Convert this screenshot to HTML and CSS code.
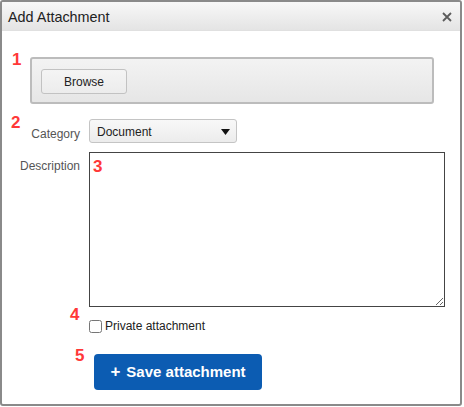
FILE: index.html
```html
<!DOCTYPE html>
<html>
<head>
<meta charset="utf-8">
<link rel="stylesheet" href="styles.css">
</head>
<body>
<div class="dialog">
  <div class="titlebar">
    <span class="title">Add Attachment</span>
    <span class="close">
      <svg width="10" height="10" viewBox="0 0 10 10"><path d="M1 1L9 9M9 1L1 9" stroke="#5c5c5c" stroke-width="1.8" stroke-linecap="butt"/></svg>
    </span>
  </div>
  <div class="content">
    <div class="filebox"><button class="browse">Browse</button></div>
    <div class="row row-cat">
      <label class="lbl lbl-cat">Category</label>
      <div class="select"><span>Document</span>
        <svg width="9" height="6" viewBox="0 0 9 6"><path d="M0 0H9L4.5 6Z" fill="#111"/></svg>
      </div>
    </div>
    <div class="row row-desc">
      <label class="lbl lbl-desc">Description</label>
      <textarea class="desc"></textarea>
    </div>
    <div class="check"><input type="checkbox" class="cb"><span>Private attachment</span></div>
    <div class="actions"><button class="save"><span class="plus">+</span>Save attachment</button></div>
  </div>
  <span class="num n1">1</span>
  <span class="num n2">2</span>
  <span class="num n3">3</span>
  <span class="num n4">4</span>
  <span class="num n5">5</span>
</div>
</body>
</html>
```
FILE: styles.css
```css
html, body { margin: 0; padding: 0; background: #fff; }
body { font-family: "Liberation Sans", Arial, sans-serif; color: #222; }
.dialog {
  position: relative;
  width: 462px; height: 406px;
  box-sizing: border-box;
  border: 2px solid #8a8a8a;
  border-radius: 3px;
  background: #fff;
  overflow: hidden;
}
.titlebar {
  height: 28px;
  display: flex; align-items: center; justify-content: space-between;
  padding: 0 8px 0 6px;
  background: linear-gradient(#f8f8f8, #e4e4e4);
  border-bottom: 1px solid #e0e0e0;
}
.title { font-size: 14.4px; color: #222; padding-top: 1px; }
.close { display: flex; width: 10px; height: 10px; margin-top: 1px; }
.content { display: flex; flex-direction: column; }
.filebox {
  margin: 26px 0 0 28px;
  width: 404px; height: 47px; box-sizing: border-box;
  border: 2px solid #bcbcbc; border-radius: 3px;
  background: linear-gradient(#f3f3f3, #e6e6e6);
  padding: 10px 0 0 9px;
}
.browse {
  display: block; width: 86px; height: 25px; box-sizing: border-box;
  border: 1px solid #c2c2c2; border-radius: 3px;
  background: linear-gradient(#f4f4f4, #ececec);
  font-family: "Liberation Sans", Arial, sans-serif; font-size: 12px; color: #222;
  padding: 0; margin: 0;
}
.row { display: flex; gap: 9px; }
.lbl { width: 78px; text-align: right; font-size: 12px; color: #555; line-height: 14px; flex: none; }
.row-cat { margin-top: 15px; }
.lbl-cat { padding-top: 8px; }
.select {
  width: 148px; height: 24px; box-sizing: border-box;
  border: 1px solid #c4c4c4; border-radius: 3px;
  background: linear-gradient(#f8f8f8, #ececec);
  display: flex; align-items: center; justify-content: space-between;
  padding: 1px 6px 0 7px;
  font-size: 12px; color: #222; line-height: 14px;
}
.row-desc { margin-top: 9px; }
.lbl-desc { padding-top: 7px; }
.desc {
  width: 356px; height: 155px; box-sizing: border-box;
  border: 1px solid #444; border-radius: 0;
  margin: 0; padding: 2px; resize: both;
  font-family: "Liberation Sans", Arial, sans-serif; font-size: 12px;
}
.check {
  display: flex; align-items: center; gap: 3px;
  margin: 12px 0 0 87px;
  font-size: 12px; color: #222; line-height: 14px;
}
.cb { width: 13px; height: 13px; margin: 0; }
.actions { margin: 21px 0 0 92px; }
.save {
  width: 168px; height: 36px; box-sizing: border-box;
  border: none; border-radius: 4px;
  background: #0c5cb2; color: #fff;
  font-family: "Liberation Sans", Arial, sans-serif; font-size: 15px; font-weight: bold;
  display: flex; align-items: center; justify-content: center;
  padding: 0 0 1px 0; margin: 0;
}
.plus { margin-right: 6px; font-size: 17px; }
.num {
  position: absolute;
  font-family: "Liberation Sans", Arial, sans-serif;
  font-weight: bold; font-size: 17px; line-height: 17px;
  color: #ff3838;
}
.n1 { left: 10px; top: 49px; }
.n2 { left: 9px; top: 112px; }
.n3 { left: 91px; top: 156px; }
.n4 { left: 68px; top: 304px; }
.n5 { left: 73px; top: 345px; }
```
